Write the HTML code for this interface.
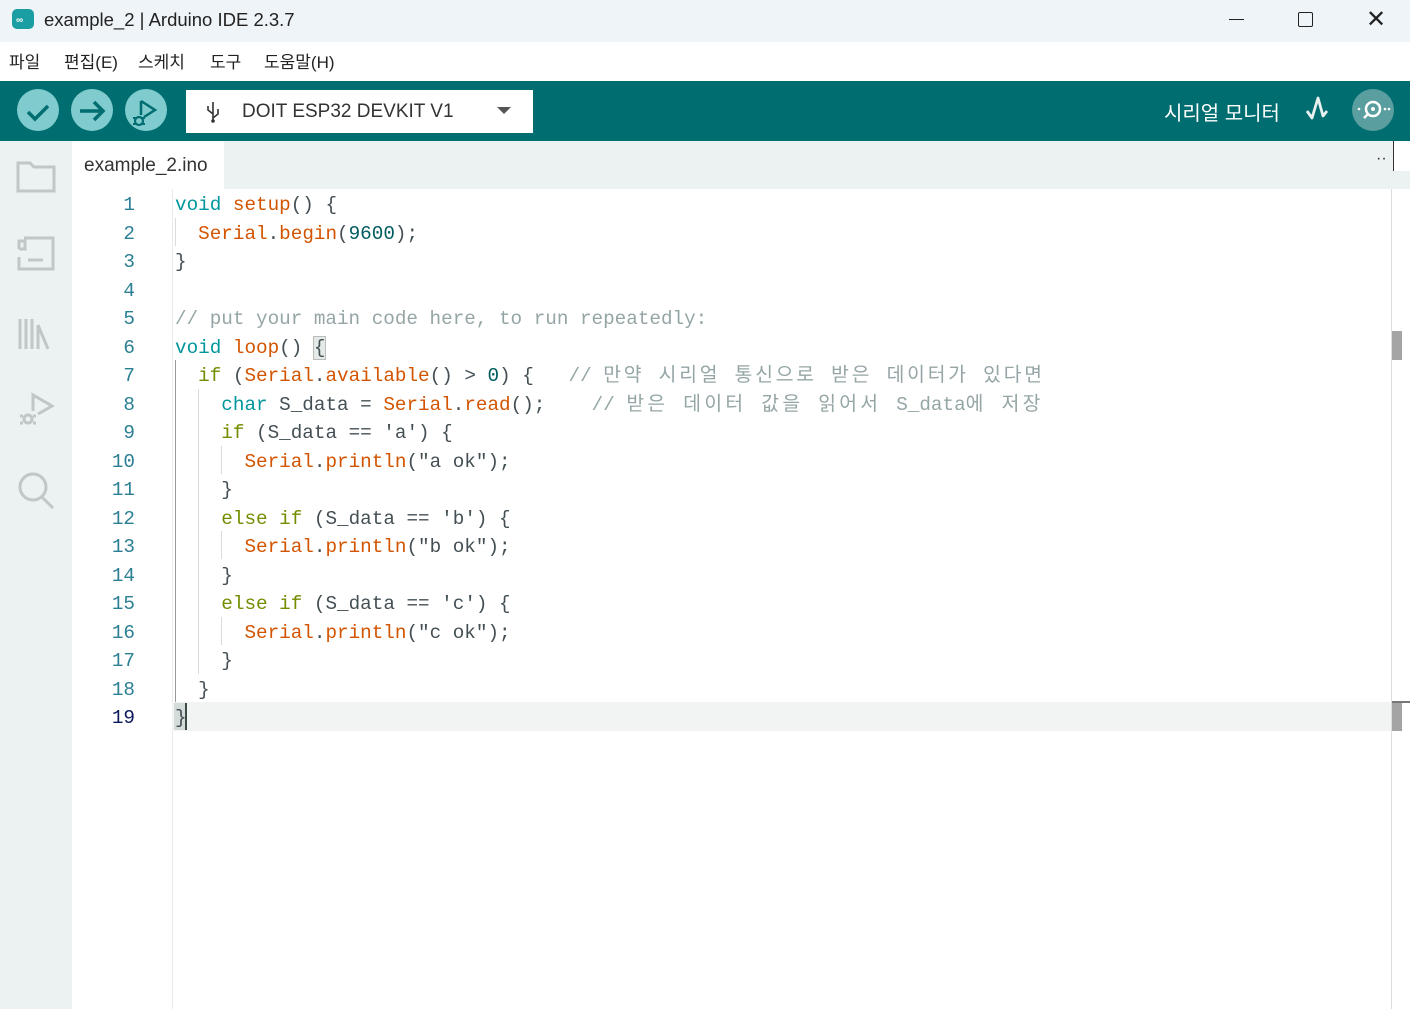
<!DOCTYPE html>
<html><head><meta charset="utf-8">
<style>
*{margin:0;padding:0;box-sizing:border-box}
body{width:1410px;height:1009px;overflow:hidden;background:#fff;font-family:"Liberation Sans","Noto Sans CJK KR",sans-serif;position:relative}
.abs{position:absolute}
#title{left:0;top:0;width:1410px;height:42px;background:#eff4f9}
#menu{left:0;top:42px;width:1410px;height:39px;background:#fff;font-size:17px;color:#222}
#tool{left:0;top:81px;width:1410px;height:60px;background:#006d70}
.btn{position:absolute;top:89px;width:42px;height:42px;border-radius:50%;background:#7fcbcd}
#side{left:0;top:141px;width:72px;height:868px;background:#ecf1f1}
#tabs{left:72px;top:141px;width:1338px;height:48px;background:#ecf1f1}
#tab{left:72px;top:141px;width:152px;height:48px;background:#fff;font-size:19px;color:#333;padding:14px 0 0 12px}
.code{position:absolute;left:175px;font-family:"Liberation Mono","Noto Sans CJK KR",monospace;font-size:19.3px;line-height:28.5px;white-space:pre;color:#434f54}
.ln{position:absolute;left:80px;width:55px;text-align:right;font-family:"Liberation Mono",monospace;font-size:19.3px;line-height:28.5px;color:#2b7f93}
.k{color:#00979c}.f{color:#d35400}.g{color:#728e00}.c{color:#95a5a6}.n{color:#005c5f}
.gd{position:absolute;width:1px;background:#d7dcdc}
</style></head><body>
<div id="title" class="abs">
 <div class="abs" style="left:12px;top:9px;width:22px;height:20px;border-radius:5px;background:#1a9ea3"></div>
 <div class="abs" style="left:16px;top:15px;font-size:10px;color:#fff;font-weight:bold;letter-spacing:-1px">∞</div>
 <div class="abs" style="left:44px;top:9px;font-size:18.5px;color:#222">example_2 | Arduino IDE 2.3.7</div>
 <div class="abs" style="left:1229px;top:19px;width:15px;height:1px;background:#222"></div>
 <div class="abs" style="left:1298px;top:12px;width:15px;height:15px;border:1.5px solid #222;border-radius:2px"></div>
 <div class="abs" style="left:1366px;top:5px;font-size:24px;color:#222">✕</div>
</div>
<div id="menu" class="abs">
 <span class="abs" style="left:9px;top:6px">파일</span>
 <span class="abs" style="left:64px;top:6px">편집(E)</span>
 <span class="abs" style="left:138px;top:6px">스케치</span>
 <span class="abs" style="left:210px;top:6px">도구</span>
 <span class="abs" style="left:264px;top:6px">도움말(H)</span>
</div>
<div id="tool" class="abs"></div>
<div class="btn" style="left:17px"></div>
<div class="btn" style="left:71px"></div>
<div class="btn" style="left:125px"></div>
<svg class="abs" style="left:0;top:81px" width="180" height="60">
 <path d="M28 31 l7 7 l13 -13" stroke="#006d70" stroke-width="3.5" fill="none"/>
 <path d="M80 30 h22 M94 21 l9 9 l-9 9" stroke="#006d70" stroke-width="3.5" fill="none"/>
 <path d="M141 20 v14 M141 20 l14 9 l-11 7" stroke="#006d70" stroke-width="2.5" fill="none"/>
 <circle cx="139" cy="40" r="4" fill="none" stroke="#006d70" stroke-width="2.2"/>
 <path d="M133 37h3M133 43h3M142 37h3M142 43h3" stroke="#006d70" stroke-width="2"/>
</svg>
<div class="abs" style="left:186px;top:90px;width:347px;height:43px;background:#fff"></div>
<svg class="abs" style="left:203px;top:100px" width="20" height="24"><path d="M10 2v20M10 14 l-5 -4 v-4 M10 18 l5 -4 v-5" stroke="#333" stroke-width="1.6" fill="none"/><circle cx="10" cy="21" r="1.8" fill="#333"/></svg>
<div class="abs" style="left:242px;top:101px;font-size:19px;color:#333">DOIT ESP32 DEVKIT V1</div>
<div class="abs" style="left:497px;top:107px;width:0;height:0;border-left:7px solid transparent;border-right:7px solid transparent;border-top:7px solid #555"></div>
<div class="abs" style="left:1164px;top:97px;font-size:20px;color:#fff">시리얼 모니터</div>
<svg class="abs" style="left:1300px;top:92px" width="40" height="36"><path d="M7 19 l5 7 l6 -20 l5 18 l4 -5" stroke="#e8f0f0" stroke-width="2.8" fill="none" stroke-linejoin="round"/></svg>
<div class="abs" style="left:1352px;top:89px;width:42px;height:42px;border-radius:50%;background:#5a9e9f"></div>
<svg class="abs" style="left:1352px;top:89px" width="42" height="42"><circle cx="21" cy="20" r="7" stroke="#fff" stroke-width="2.5" fill="none"/><circle cx="21" cy="20" r="2" fill="#fff"/><path d="M16 25 l-4 4" stroke="#fff" stroke-width="2.5"/><circle cx="7" cy="20" r="1.3" fill="#fff"/><circle cx="33" cy="20" r="1.3" fill="#fff"/><circle cx="37" cy="20" r="1.3" fill="#fff"/></svg>
<div id="side" class="abs"></div>
<svg class="abs" style="left:0;top:141px" width="72" height="380" fill="none" stroke="#bfc7c7" stroke-width="3">
 <path d="M18 22 h12 l4 4 h20 v24 h-36z"/>
 <path d="M24 97 h29 v31 h-34 v-12 M19 108 v-8 h6 v8 h-6 M28 119 h15"/>
 <path d="M20 178 v30 M26 178 v30 M32 178 v30 M38 184 l10 24 M38 184 v24" />
 <path d="M33 270 v-16 l19 11 l-14 8"/>
 <circle cx="28" cy="278" r="4"/>
 <path d="M20 275h3M20 282h3M33 275h3M33 282h3"/>
 <circle cx="33" cy="346" r="13"/><path d="M42 356 l11 11"/>
</svg>
<div id="tabs" class="abs"></div>
<div id="tab" class="abs">example_2.ino</div>
<div class="abs" style="left:1376px;top:150px;font-size:16px;color:#333">··</div>
<div class="abs" style="left:1393px;top:141px;width:17px;height:30px;background:#fff;border-left:1px solid #333"></div>
<div class="abs" style="left:172px;top:189px;width:1px;height:820px;background:#eaeaea"></div>
<div class="abs" style="left:172px;top:702px;width:1219px;height:29px;background:#f2f4f3"></div>
<div class="abs" style="left:174px;top:703px;width:11px;height:27px;background:#d3dcd8"></div>
<div class="abs" style="left:185px;top:703px;width:2px;height:27px;background:#3c4a4a"></div>
<div class="abs" style="left:1391px;top:189px;width:1px;height:820px;background:#ddd"></div>
<div class="abs" style="left:1392px;top:331px;width:10px;height:29px;background:#a4a4a4"></div>
<div class="abs" style="left:1392px;top:702px;width:10px;height:29px;background:#a4a4a4"></div>
<div class="abs" style="left:1392px;top:701px;width:18px;height:2px;background:#777"></div>
<div class="gd" style="left:175px;top:218px;height:28px"></div>
<div class="gd" style="left:175px;top:360px;height:342px;background:#999"></div>
<div class="gd" style="left:198px;top:389px;height:285px"></div>
<div class="gd" style="left:221px;top:446px;height:28px"></div>
<div class="gd" style="left:221px;top:531px;height:28px"></div>
<div class="gd" style="left:221px;top:617px;height:28px"></div>
<div class="ln" style="top:191px">1<br>2<br>3<br>4<br>5<br>6<br>7<br>8<br>9<br>10<br>11<br>12<br>13<br>14<br>15<br>16<br>17<br>18<br><span style="color:#0b1a5c">19</span></div>
<div class="code" style="top:191px"><span class="k">void</span> <span class="f">setup</span>() {
  <span class="f">Serial</span>.<span class="f">begin</span>(<span class="n">9600</span>);
}

<span class="c">// put your main code here, to run repeatedly:</span>
<span class="k">void</span> <span class="f">loop</span>() <span style="background:#e4eae8;outline:1px solid #bbb">{</span>
  <span class="g">if</span> (<span class="f">Serial</span>.<span class="f">available</span>() &gt; <span class="n">0</span>) {   <span class="c">// <span style="letter-spacing:2.8px">만약 시리얼 통신으로 받은 데이터가 있다면</span></span>
    <span class="k">char</span> S_data = <span class="f">Serial</span>.<span class="f">read</span>();    <span class="c">// <span style="letter-spacing:3.3px">받은 데이터 값을 읽어서 </span>S_data<span style="letter-spacing:3.3px">에 저장</span></span>
    <span class="g">if</span> (S_data == 'a') {
      <span class="f">Serial</span>.<span class="f">println</span>("a ok");
    }
    <span class="g">else</span> <span class="g">if</span> (S_data == 'b') {
      <span class="f">Serial</span>.<span class="f">println</span>("b ok");
    }
    <span class="g">else</span> <span class="g">if</span> (S_data == 'c') {
      <span class="f">Serial</span>.<span class="f">println</span>("c ok");
    }
  }
}</div>
</body></html>
